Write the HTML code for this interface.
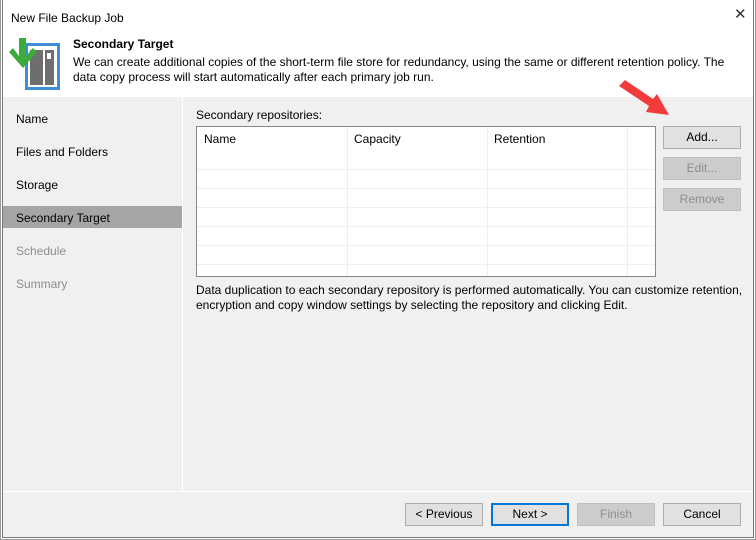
<!DOCTYPE html>
<html><head><style>
*{margin:0;padding:0;box-sizing:border-box}
body{width:756px;height:540px;background:#fff;font-family:"Liberation Sans",sans-serif;font-size:12px;color:#000;position:relative;overflow:hidden}
.a{position:absolute}
.btn{position:absolute;border:1px solid #adadad;background:#e1e1e1;text-align:center;line-height:21px;font-size:12px}
.dis{border-color:#bfbfbf;background:#cccccc;color:#8d8d8d}
.side{font-size:12px;left:16px}
</style></head><body>
<div class="a" style="left:0;top:0;width:756px;height:540px;border:1px solid #9a9a9a;border-top:none"></div>
<div class="a" style="left:2px;top:0;width:752px;height:538px;border:1px solid #7a7a7a;border-top:none"></div>
<div class="a" style="left:11px;top:11px;font-size:12px">New File Backup Job</div>
<div class="a" style="left:734px;top:5px;font-size:15px;color:#333;font-weight:300">✕</div>
<svg class="a" style="left:0;top:30px" width="70" height="66" viewBox="0 30 70 66">
<rect x="26.5" y="44.5" width="32" height="44" fill="none" stroke="#3c8fd4" stroke-width="3"/>
<rect x="30" y="50" width="13" height="35" fill="#6e6e6e"/>
<rect x="45" y="50" width="9" height="35" fill="#6e6e6e"/>
<rect x="47" y="53" width="4" height="6" fill="#fff"/>
<path d="M19 38h7v18l7-8l4 4l-14 16l-14-16l4-4l6 8z" fill="#3bab3b"/>
</svg>
<div class="a" style="left:73px;top:37px;font-weight:bold;font-size:12px">Secondary Target</div>
<div class="a" style="left:73px;top:55px;width:670px;line-height:15px;font-size:12px">We can create additional copies of the short-term file store for redundancy, using the same or different retention policy. The data copy process will start automatically after each primary job run.</div>
<div class="a" style="left:3px;top:97px;width:179px;height:394px;background:#f0f0f0"></div>
<div class="a" style="left:183px;top:97px;width:570px;height:394px;background:#f0f0f0"></div>
<div class="a" style="left:3px;top:491px;width:750px;height:1px;background:#fff"></div>
<div class="a" style="left:3px;top:492px;width:750px;height:45px;background:#f0f0f0"></div>
<div class="a" style="left:3px;top:206px;width:179px;height:22px;background:#a5a5a5"></div>
<div class="a side" style="top:112px">Name</div>
<div class="a side" style="top:145px">Files and Folders</div>
<div class="a side" style="top:178px">Storage</div>
<div class="a side" style="top:211px">Secondary Target</div>
<div class="a side" style="top:244px;color:#8d8d8d">Schedule</div>
<div class="a side" style="top:277px;color:#8d8d8d">Summary</div>
<div class="a" style="left:196px;top:108px">Secondary repositories:</div>
<div class="a" style="left:196px;top:126px;width:460px;height:151px;background:#fff;border:1px solid #828790"></div>
<div class="a" style="left:204px;top:132px">Name</div>
<div class="a" style="left:354px;top:132px">Capacity</div>
<div class="a" style="left:494px;top:132px">Retention</div>
<div class="a" style="left:347px;top:127px;width:1px;height:149px;background:#e8edf2"></div>
<div class="a" style="left:487px;top:127px;width:1px;height:149px;background:#e8edf2"></div>
<div class="a" style="left:627px;top:127px;width:1px;height:149px;background:#e8edf2"></div>
<div class="a" style="left:197px;top:169px;width:458px;height:1px;background:#eceff3"></div>
<div class="a" style="left:197px;top:188px;width:458px;height:1px;background:#eceff3"></div>
<div class="a" style="left:197px;top:207px;width:458px;height:1px;background:#eceff3"></div>
<div class="a" style="left:197px;top:226px;width:458px;height:1px;background:#eceff3"></div>
<div class="a" style="left:197px;top:245px;width:458px;height:1px;background:#eceff3"></div>
<div class="a" style="left:197px;top:264px;width:458px;height:1px;background:#eceff3"></div>
<div class="a" style="left:196px;top:283px;width:550px;line-height:15px">Data duplication to each secondary repository is performed automatically. You can customize retention, encryption and copy window settings by selecting the repository and clicking Edit.</div>
<div class="btn" style="left:663px;top:126px;width:78px;height:23px">Add...</div>
<div class="btn dis" style="left:663px;top:157px;width:78px;height:23px">Edit...</div>
<div class="btn dis" style="left:663px;top:188px;width:78px;height:23px">Remove</div>
<svg class="a" style="left:615px;top:77px" width="56" height="42" viewBox="0 0 56 42"><path d="M4 9L10 3L38 22L42 17L54 38L31 35L34 29Z" fill="#f23b3b"/></svg>
<div class="btn" style="left:405px;top:503px;width:78px;height:23px">&lt; Previous</div>
<div class="btn" style="left:491px;top:503px;width:78px;height:23px;border:2px solid #0078d7;line-height:19px">Next &gt;</div>
<div class="btn dis" style="left:577px;top:503px;width:78px;height:23px">Finish</div>
<div class="btn" style="left:663px;top:503px;width:78px;height:23px">Cancel</div>
</body></html>
